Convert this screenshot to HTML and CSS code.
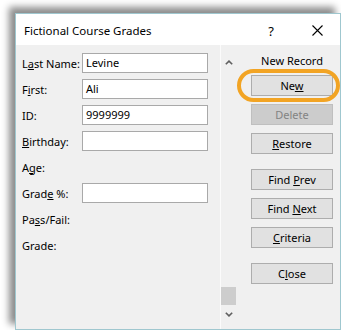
FILE: index.html
```html
<!DOCTYPE html>
<html>
<head>
<meta charset="utf-8">
<link rel="stylesheet" href="styles.css">
</head>
<body>
<div class="desk">
  <div class="win">
    <div class="titlebar">
      <span class="title">Fictional Course Grades</span>
      <span class="help">?</span>
      <span class="xbtn"><svg width="11" height="11" viewBox="0 0 11 11"><path d="M0.5 0.5L10.5 10.5M10.5 0.5L0.5 10.5" stroke="#000" stroke-width="1.1" fill="none"/></svg></span>
    </div>
    <div class="body">
      <div class="form">
        <label class="lbl">L<u>a</u>st Name:</label><div class="inp">Levine</div>
        <label class="lbl">F<u>i</u>rst:</label><div class="inp">Ali</div>
        <label class="lbl">ID:</label><div class="inp">9999999</div>
        <label class="lbl"><u>B</u>irthday:</label><div class="inp"></div>
        <label class="lbl">A<u>g</u>e:</label><div></div>
        <label class="lbl">Grad<u>e</u> %:</label><div class="inp"></div>
        <label class="lbl">Pa<u>s</u>s/Fail:</label><div></div>
        <label class="lbl">Grade:</label><div></div>
      </div>
      <div class="scroll">
        <div class="arrow"><svg width="8" height="5" viewBox="0 0 8 5"><path d="M0.8 4.3L4 1.1L7.2 4.3" stroke="#606060" stroke-width="1.6" fill="none"/></svg></div>
        <div class="track"><div class="thumb"></div></div>
        <div class="arrow"><svg width="8" height="5" viewBox="0 0 8 5"><path d="M0.8 0.7L4 3.9L7.2 0.7" stroke="#606060" stroke-width="1.6" fill="none"/></svg></div>
      </div>
      <div class="actions">
        <div class="caption">New Record</div>
        <div class="btn">Ne<u>w</u></div>
        <div class="btn disabled">Delete</div>
        <div class="btn"><u>R</u>estore</div>
        <div class="btn spaced">Find <u>P</u>rev</div>
        <div class="btn">Find <u>N</u>ext</div>
        <div class="btn"><u>C</u>riteria</div>
        <div class="btn spaced">C<u>l</u>ose</div>
        <div class="ring"></div>
      </div>
    </div>
  </div>
</div>
</body>
</html>
```
FILE: styles.css
```css
html, body {
  margin: 0;
  padding: 0;
  background: #ffffff;
}
body {
  font-family: "Noto Sans", "Open Sans", sans-serif;
  font-size: 11px;
  color: #000;
}
.desk {
  padding: 13px 0 0 15px;
  width: 341px;
  height: 330px;
  box-sizing: border-box;
  overflow: hidden;
}
.win {
  width: 326px;
  height: 317px;
  box-sizing: border-box;
  border: 1px solid #9fc7cf;
  background: #f0f0f0;
  box-shadow: -6px -6px 7px rgba(0, 0, 0, 0.45);
  display: flex;
  flex-direction: column;
}
.titlebar {
  height: 31px;
  background: #ffffff;
  display: flex;
  align-items: center;
  padding: 2px 0 0 8px;
  box-sizing: border-box;
}
.title {
  font-size: 11.5px;
  flex: 1;
}
.help {
  font-size: 13px;
  width: 14px;
  text-align: center;
  margin-right: 34px;
}
.xbtn {
  display: flex;
  width: 11px;
  margin-right: 17px;
}
.body {
  flex: 1;
  display: flex;
}
.form {
  width: 204px;
  box-sizing: border-box;
  padding: 8px 0 0 6px;
  display: grid;
  grid-template-columns: 60px 126px;
  grid-auto-rows: 20px;
  row-gap: 6px;
  align-content: start;
}
.lbl {
  align-self: center;
  white-space: nowrap;
}
.inp {
  background: #fff;
  border: 1px solid #a9a9a9;
  box-sizing: border-box;
  padding: 0 0 0 3px;
  line-height: 18px;
}
.scroll {
  width: 17px;
  box-sizing: border-box;
  border-left: 1px solid #fbfbfb;
  display: flex;
  flex-direction: column;
  padding: 8px 0 6px;
}
.arrow {
  height: 18px;
  display: flex;
  align-items: center;
  justify-content: center;
}
.track {
  flex: 1;
  display: flex;
  flex-direction: column;
  justify-content: flex-end;
}
.thumb {
  height: 18px;
  width: 15px;
  background: #cdcdcd;
}
.actions {
  flex: 1;
  position: relative;
  padding: 8px 0 0 14px;
  display: flex;
  flex-direction: column;
  align-items: flex-start;
}
.caption {
  width: 82px;
  text-align: center;
  line-height: 16px;
  white-space: nowrap;
  margin-bottom: 6px;
}
.btn {
  width: 82px;
  height: 21px;
  box-sizing: border-box;
  background: #e1e1e1;
  border: 1px solid #adadad;
  text-align: center;
  line-height: 19px;
  margin-bottom: 8px;
}
.btn.disabled {
  background: #cccccc;
  border-color: #bfbfbf;
  color: #838383;
}
.btn.spaced {
  margin-top: 7px;
}
.ring {
  position: absolute;
  left: 0;
  top: 24px;
  width: 103px;
  height: 33px;
  box-sizing: border-box;
  border: 4px solid #f2a424;
  border-radius: 17px;
}
```
